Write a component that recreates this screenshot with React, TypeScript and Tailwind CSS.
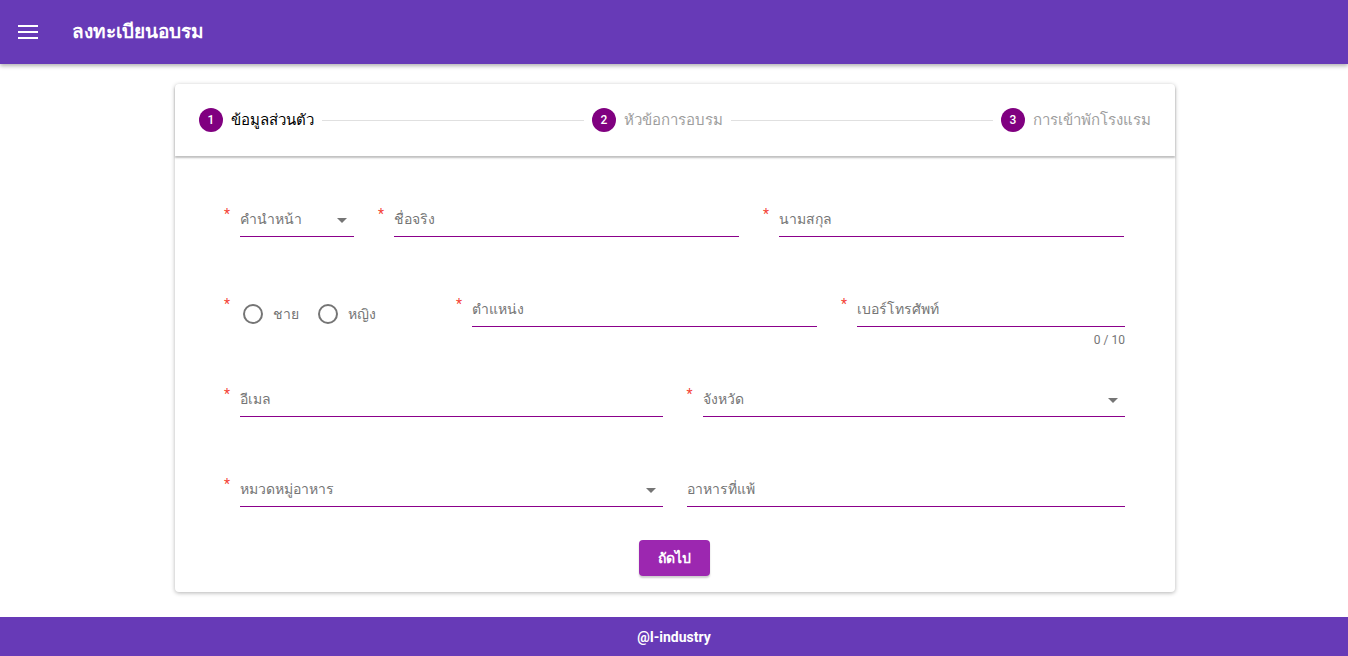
import { ReactNode } from 'react';

const font = { fontFamily: 'Roboto, "Noto Sans", "DejaVu Sans", sans-serif' };

function Arrow() {
  return (
    <svg width="10" height="5" viewBox="0 0 10 5" className="shrink-0">
      <path d="M0 0 L10 0 L5 5 Z" fill="#757575" />
    </svg>
  );
}

interface FieldProps {
  label: string;
  required?: boolean;
  select?: boolean;
  hint?: string;
}

function Field({ label, required = true, select = false, hint }: FieldProps) {
  return (
    <div className="flex flex-col">
      <div className="flex items-end h-10">
        {required && <span className="w-4 shrink-0 text-[#f44336] text-sm leading-5 mb-[13px]">*</span>}
        <div className="flex-1 h-10 flex flex-col justify-end">
          <div className="flex items-end justify-between pb-[7px] pr-[7px]">
            <span className="text-sm leading-5 text-[#757575]">{label}</span>
            {select && <span className="mb-[6px]"><Arrow /></span>}
          </div>
          <div className="h-px bg-[#8b008b]" />
        </div>
      </div>
      {hint && (
        <div className="h-0">
          <div className="text-right text-xs leading-4 text-[#757575] pt-[5px]">{hint}</div>
        </div>
      )}
    </div>
  );
}

function Radio({ label }: { label: string }) {
  return (
    <div className="flex items-center gap-[10px]">
      <span className="w-5 h-5 rounded-full border-2 border-[#757575]" />
      <span className="text-sm text-[#757575]">{label}</span>
    </div>
  );
}

function Step({ n, label, active }: { n: number; label: string; active?: boolean }) {
  return (
    <div className="flex items-center gap-2 shrink-0">
      <span className="w-6 h-6 rounded-full bg-[#800080] text-white text-xs font-medium flex items-center justify-center">{n}</span>
      <span className={active ? 'text-[15px] font-medium text-black' : 'text-[15px] text-[#9e9e9e]'}>{label}</span>
    </div>
  );
}

function Line() {
  return <div className="flex-1 h-px bg-[#e0e0e0] mx-2" />;
}

function Row({ children, className }: { children: ReactNode; className: string }) {
  return <div className={className}>{children}</div>;
}

export default function App() {
  return (
    <div className="min-h-[656px] bg-white flex flex-col" style={font}>
      <header className="h-16 bg-[#673ab7] flex items-center px-[18px] shadow-[0_2px_4px_rgba(0,0,0,0.3)] relative z-10">
        <svg width="20" height="14" viewBox="0 0 20 14">
          <rect x="0" y="0" width="20" height="2" fill="white" />
          <rect x="0" y="6" width="20" height="2" fill="white" />
          <rect x="0" y="12" width="20" height="2" fill="white" />
        </svg>
        <h1 className="ml-[34px] text-white text-[19px] font-bold">ลงทะเบียนอบรม</h1>
      </header>

      <main className="flex-1 pt-5 pb-[25px] pl-[2px] flex justify-center">
        <div className="w-[1000px] h-[508px] bg-white rounded shadow-[0_1px_4px_rgba(0,0,0,0.3)] flex flex-col">
          <div className="h-[72px] flex items-center px-6 shadow-[0_2px_2px_rgba(0,0,0,0.25)] rounded-t">
            <Step n={1} label="ข้อมูลส่วนตัว" active />
            <Line />
            <Step n={2} label="หัวข้อการอบรม" />
            <Line />
            <Step n={3} label="การเข้าพักโรงแรม" />
          </div>

          <form className="flex-1 flex flex-col pl-[49px] pr-[50px] pt-[41px] pb-4">
            <Row className="grid grid-cols-[130px_361px_361px] gap-x-6">
              <Field label="คำนำหน้า" select />
              <Field label="ชื่อจริง" />
              <Field label="นามสกุล" />
            </Row>

            <Row className="grid grid-cols-[208px_361px_284px] gap-x-6 mt-[50px]">
              <div className="flex items-end h-10">
                <span className="w-4 shrink-0 text-[#f44336] text-sm leading-5 mb-[13px]">*</span>
                <div className="flex items-center gap-[19px] ml-[3px] mb-[3px]">
                  <Radio label="ชาย" />
                  <Radio label="หญิง" />
                </div>
              </div>
              <Field label="ตำแหน่ง" />
              <Field label="เบอร์โทรศัพท์" hint="0 / 10" />
            </Row>

            <Row className="grid grid-cols-2 gap-x-6 mt-[50px]">
              <Field label="อีเมล" />
              <Field label="จังหวัด" select />
            </Row>

            <Row className="grid grid-cols-2 gap-x-6 mt-[50px]">
              <Field label="หมวดหมู่อาหาร" select />
              <Field label="อาหารที่แพ้" required={false} />
            </Row>

            <div className="flex justify-center mt-[33px]">
              <button
                type="button"
                className="w-[71px] h-9 rounded bg-[#9c27b0] text-white text-sm font-bold shadow-[0_2px_2px_rgba(0,0,0,0.2)]"
              >
                ถัดไป
              </button>
            </div>
          </form>
        </div>
      </main>

      <footer className="h-[39px] bg-[#673ab7] flex items-center justify-center">
        <span className="text-white text-sm font-bold">@I-industry</span>
      </footer>
    </div>
  );
}
